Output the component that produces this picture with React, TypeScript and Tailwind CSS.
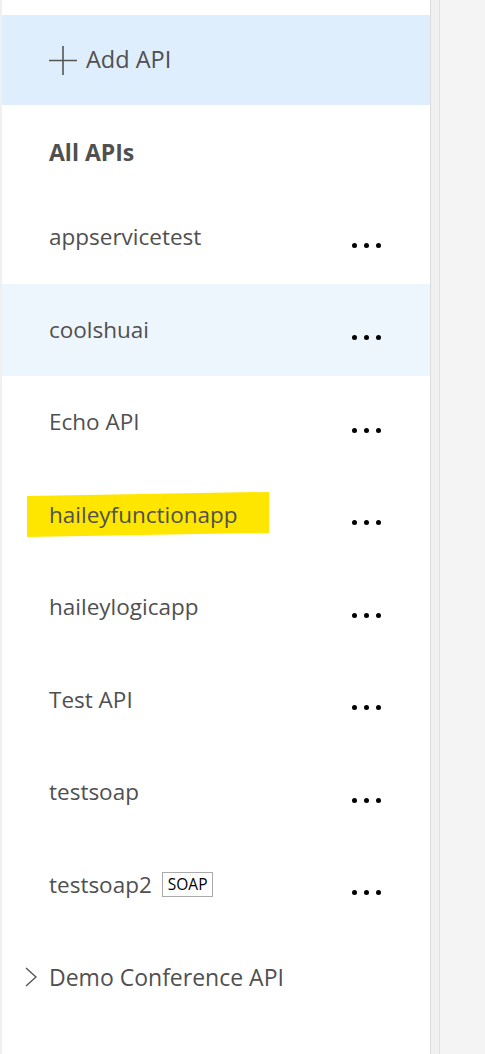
import React from "react";

const apis = [
  { name: "appservicetest" },
  { name: "coolshuai", selected: true },
  { name: "Echo API" },
  { name: "haileyfunctionapp", marked: true },
  { name: "haileylogicapp" },
  { name: "Test API" },
  { name: "testsoap" },
  { name: "testsoap2", soap: true },
];

function Dots() {
  return (
    <div className="flex items-center gap-[7px] pt-4">
      <span className="block h-[5px] w-[5px] rounded-full bg-black" />
      <span className="block h-[5px] w-[5px] rounded-full bg-black" />
      <span className="block h-[5px] w-[5px] rounded-full bg-black" />
    </div>
  );
}

export default function App() {
  return (
    <div
      className="flex h-[1054px] w-[485px] bg-[#f4f4f4] text-[#505050]"
      style={{ fontFamily: '"Open Sans", "Noto Sans", sans-serif' }}
    >
      <div className="w-[2px] bg-[#f0f0f0]" />
      <div className="flex w-[428px] flex-col bg-white pt-[15px]">
        {/* Add API */}
        <div className="flex h-[90px] items-center gap-[9px] bg-[#deeefc] pl-[47px]">
          <svg width="28" height="29" viewBox="0 0 28 29" className="text-[#555]">
            <path d="M0 14.5H28M14 0V29" stroke="currentColor" strokeWidth="1.6" fill="none" />
          </svg>
          <span className="text-[23.5px]">Add API</span>
        </div>

        <div className="flex h-[86px] items-center pl-[47px] pt-2">
          <span className="text-[23px] font-bold">All APIs</span>
        </div>

        {apis.map((a) => (
          <div
            key={a.name}
            className={
              a.selected
                ? "flex h-[92.5px] items-center justify-between bg-[#eef6fd] pl-[47px] pr-[49px]"
                : "flex h-[92.5px] items-center justify-between pl-[47px] pr-[49px]"
            }
          >
            <div className="flex items-center gap-[10px]">
              {a.marked ? (
                <span className="relative">
                  {/* marker highlight */}
                  <span className="absolute -left-[22px] -right-[31px] -top-[4px] -bottom-[3px] -skew-y-1 bg-[#ffe600]" />
                  <span className="relative text-[22.5px]">{a.name}</span>
                </span>
              ) : (
                <span className="text-[22.5px]">{a.name}</span>
              )}
              {a.soap && (
                <span className="border border-[#aaa] px-[5px] text-[15.5px] leading-[23px] text-black">
                  SOAP
                </span>
              )}
            </div>
            <Dots />
          </div>
        ))}

        <div className="flex h-[92.5px] items-center gap-[12px] pl-[23px]">
          <svg width="12" height="20" viewBox="0 0 12 20" className="text-[#555]">
            <path d="M1 1L11 10L1 19" stroke="currentColor" strokeWidth="1.4" fill="none" />
          </svg>
          <span className="text-[23px]">Demo Conference API</span>
        </div>
      </div>
      <div className="w-[1px] bg-[#dcdcdc]" />
      <div className="w-[8px] bg-[#f0f0f0]" />
      <div className="w-[1px] bg-[#e0e0e0]" />
      <div className="flex-1 bg-[#f4f4f4]" />
    </div>
  );
}
